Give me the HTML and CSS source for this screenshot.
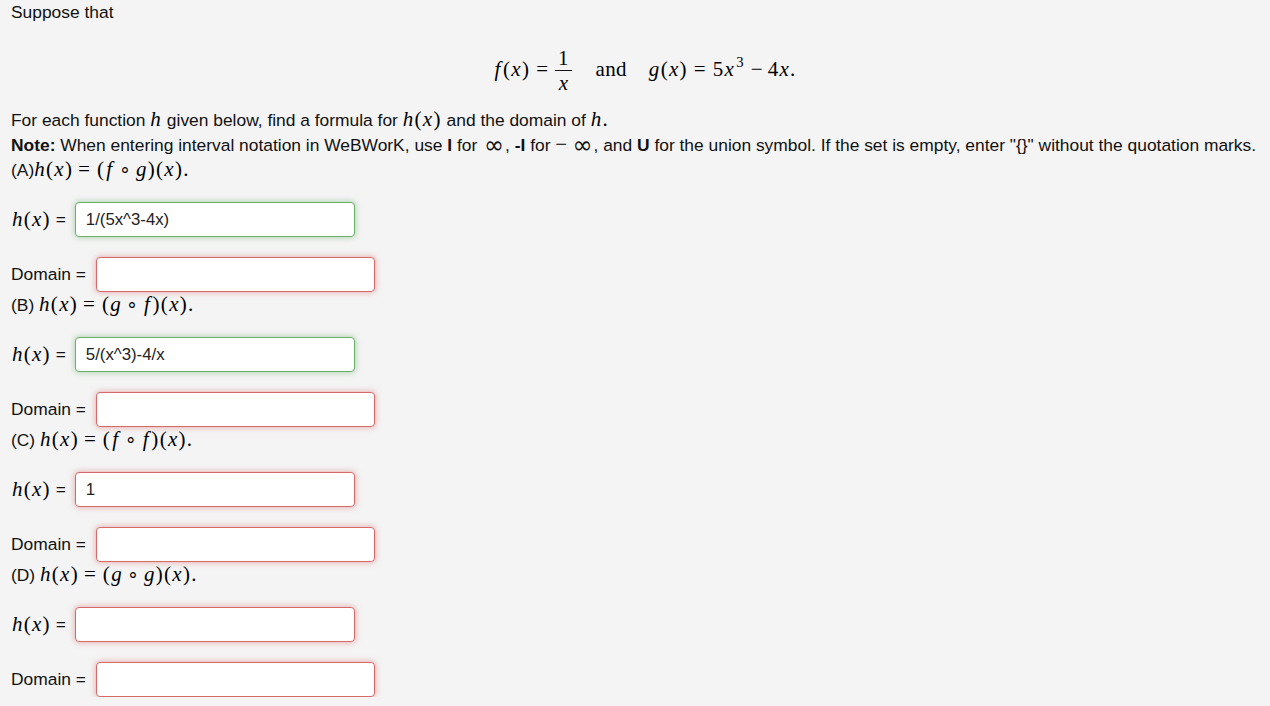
FILE: index.html
```html
<!DOCTYPE html>
<html>
<head>
<meta charset="utf-8">
<link rel="stylesheet" href="styles.css">
</head>
<body>
<div class="page">
  <p class="line">Suppose that</p>
  <div class="display">
    <span class="m"><i class="f">f</i>(<i>x</i>)</span><span class="rel">=</span><span class="frac"><span class="num">1</span><span class="den"><i>x</i></span></span>
    <span class="and">and</span>
    <span class="m"><i>g</i>(<i>x</i>)</span><span class="rel">=</span><span class="m">5<i>x</i><sup>3</sup></span><span class="bin">−</span><span class="m">4<i>x</i>.</span>
  </div>
  <p class="line">For each function <span class="m"><i>h</i></span> given below, find a formula for <span class="m"><i>h</i>(<i>x</i>)</span> and the domain of <span class="m"><i>h</i>.</span></p>
  <p class="line"><b>Note:</b> When entering interval notation in WeBWorK, use <b>I</b> for <span class="inf">∞</span>, <b>-I</b> for <span class="m"><span class="neg">−</span></span><span class="inf">∞</span>, and <b>U</b> for the union symbol. If the set is empty, enter "{}" without the quotation marks.</p>

  <p class="line">(A)<span class="m"><i>h</i>(<i>x</i>)<span class="rel">=</span>(<i class="f">f</i><span class="circ">∘</span><i>g</i>)(<i>x</i>).</span></p>
  <div class="row first"><span class="lab m"><i>h</i>(<i>x</i>)</span><span class="eq">=</span><input class="ans ok" type="text" value="1/(5x^3-4x)"></div>
  <div class="row"><span class="lab">Domain =</span><input class="ans bad dom" type="text" value=""></div>

  <p class="line">(B) <span class="m"><i>h</i>(<i>x</i>)<span class="rel">=</span>(<i>g</i><span class="circ">∘</span><i class="f">f</i>)(<i>x</i>).</span></p>
  <div class="row first"><span class="lab m"><i>h</i>(<i>x</i>)</span><span class="eq">=</span><input class="ans ok" type="text" value="5/(x^3)-4/x"></div>
  <div class="row"><span class="lab">Domain =</span><input class="ans bad dom" type="text" value=""></div>

  <p class="line">(C) <span class="m"><i>h</i>(<i>x</i>)<span class="rel">=</span>(<i class="f">f</i><span class="circ">∘</span><i class="f">f</i>)(<i>x</i>).</span></p>
  <div class="row first"><span class="lab m"><i>h</i>(<i>x</i>)</span><span class="eq">=</span><input class="ans bad" type="text" value="1"></div>
  <div class="row"><span class="lab">Domain =</span><input class="ans bad dom" type="text" value=""></div>

  <p class="line">(D) <span class="m"><i>h</i>(<i>x</i>)<span class="rel">=</span>(<i>g</i><span class="circ">∘</span><i>g</i>)(<i>x</i>).</span></p>
  <div class="row first"><span class="lab m"><i>h</i>(<i>x</i>)</span><span class="eq">=</span><input class="ans bad" type="text" value=""></div>
  <div class="row"><span class="lab">Domain =</span><input class="ans bad dom" type="text" value=""></div>
</div>
</body>
</html>
```
FILE: styles.css
```css
html, body {
  margin: 0;
  padding: 0;
  background: #f4f4f4;
}
.page {
  padding: 0 11px;
  font-family: "Liberation Sans", Arial, sans-serif;
  font-size: 17.4px;
  color: #111;
}
.line {
  margin: 0;
  line-height: 25px;
  height: 25px;
  white-space: nowrap;
}
.line:first-child {
  line-height: 24px;
  height: 24px;
}
.m {
  font-family: "Liberation Serif", "Times New Roman", serif;
  font-size: 21px;
  letter-spacing: 1.3px;
  color: #000;
}
.m .m { font-size: 1em; }
.m i { font-style: italic; }
.m i.f { margin-right: 1.5px; margin-left: 1px; }
.circ {
  display: inline-block;
  font-family: "DejaVu Sans", sans-serif;
  font-size: 19px;
  line-height: 0;
  margin: 0 5px 0 4px;
  letter-spacing: 0;
}
.m .rel { margin: 0 7px 0 5px; letter-spacing: 0; }
.inf {
  font-family: "DejaVu Sans", sans-serif;
  font-size: 24px;
  line-height: 0;
  vertical-align: -2px;
  margin: 0 1px 0 2px;
}
.neg { margin-right: 2px; }
.display {
  margin: 20px 0 13px;
  height: 50px;
  display: flex;
  align-items: center;
  justify-content: center;
  padding-left: 20px;
  font-family: "Liberation Serif", "Times New Roman", serif;
  font-size: 21px;
  color: #000;
}
.display .m { font-size: 1em; }
.display sup { font-size: 0.7em; vertical-align: 0.55em; line-height: 0; margin-left: 1px; }
.display .rel { margin: 0 7px 0 6px; }
.bin { margin: 0 5px 0 6px; }
.and { margin: 0 22px 0 24px; letter-spacing: 0.3px; }
.frac {
  display: inline-flex;
  flex-direction: column;
  align-items: center;
  margin-top: 2px;
}
.num {
  padding: 0 3px;
  border-bottom: 1px solid #111;
  line-height: 24px;
}
.den { line-height: 24px; }
.den i { font-style: italic; }
.row {
  display: flex;
  align-items: center;
  height: 35px;
  margin-top: 20px;
}
.lab { white-space: nowrap; }
.lab.m { font-size: 21px; margin-left: 1px; letter-spacing: 1.2px; }
.eq { margin-left: 5px; }
.ans {
  box-sizing: border-box;
  height: 35px;
  width: 280px;
  margin-left: 9px;
  padding: 0 10px;
  border-radius: 4px;
  border: 1px solid #ccc;
  background: #fff;
  font-family: "Liberation Sans", Arial, sans-serif;
  font-size: 16.8px;
  color: #222;
  outline: none;
}
.ans.dom { margin-left: 10px; width: 279px; }
.ans.ok {
  border-color: #6cae6c;
  box-shadow: 0 0 6px rgba(92, 168, 92, 0.55);
}
.ans.bad {
  border-color: #d46a6a;
  box-shadow: 0 0 6px rgba(212, 90, 90, 0.55);
}
```
